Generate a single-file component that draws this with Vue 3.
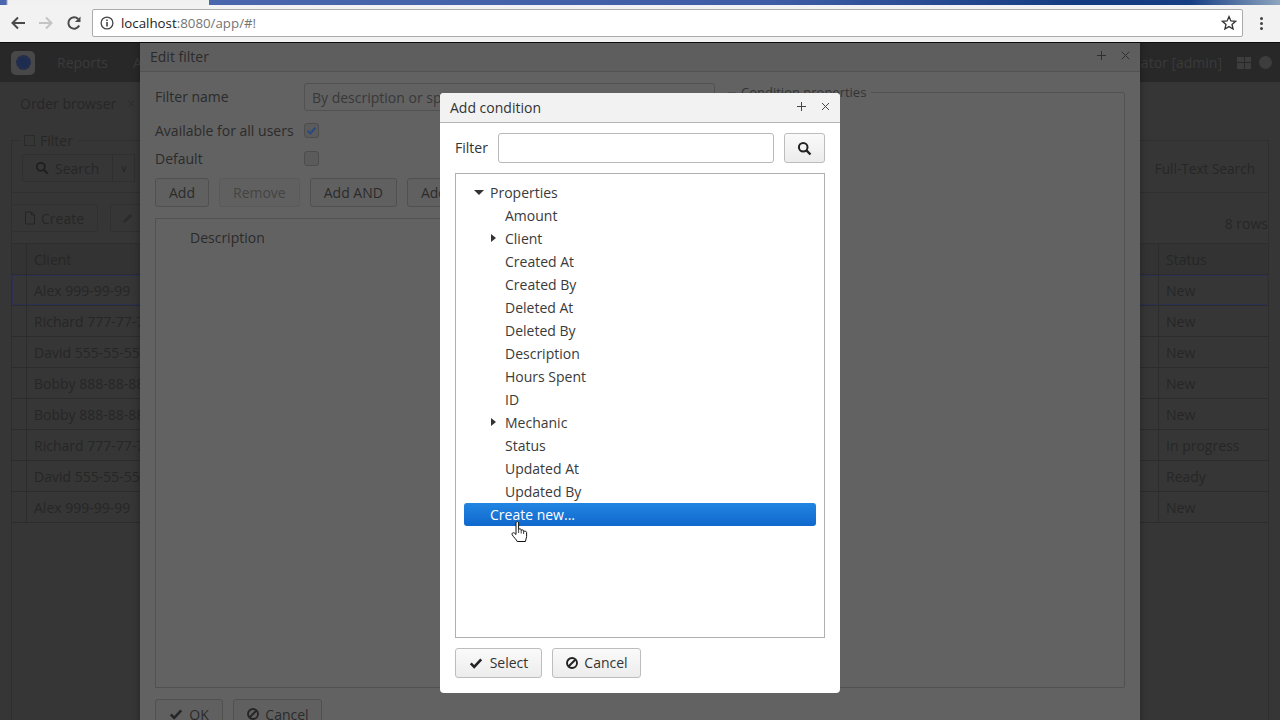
<script setup>
const tree = [
  { label: 'Properties', level: 'top', caret: 'down' },
  { label: 'Amount', level: 'sub' },
  { label: 'Client', level: 'sub', caret: 'right' },
  { label: 'Created At', level: 'sub' },
  { label: 'Created By', level: 'sub' },
  { label: 'Deleted At', level: 'sub' },
  { label: 'Deleted By', level: 'sub' },
  { label: 'Description', level: 'sub' },
  { label: 'Hours Spent', level: 'sub' },
  { label: 'ID', level: 'sub' },
  { label: 'Mechanic', level: 'sub', caret: 'right' },
  { label: 'Status', level: 'sub' },
  { label: 'Updated At', level: 'sub' },
  { label: 'Updated By', level: 'sub' },
  { label: 'Create new...', level: 'top', selected: true }
]
const rows = [
  ['Alex 999-99-99', 'New'],
  ['Richard 777-77-77', 'New'],
  ['David 555-55-55', 'New'],
  ['Bobby 888-88-88', 'New'],
  ['Bobby 888-88-88', 'New'],
  ['Richard 777-77-77', 'In progress'],
  ['David 555-55-55', 'Ready'],
  ['Alex 999-99-99', 'New']
]
</script>

<template>
  <div class="screen">
    <div class="tabstrip"><div class="tab"></div></div>
    <div class="toolbar">
      <svg class="nav-ic" viewBox="0 0 16 16"><path d="M15 8H3M8 2.5 2.5 8 8 13.5" fill="none" stroke="#4a4a4a" stroke-width="2"/></svg>
      <svg class="nav-ic" viewBox="0 0 16 16"><path d="M1 8h12M8 2.5 13.5 8 8 13.5" fill="none" stroke="#c4c4c4" stroke-width="2"/></svg>
      <svg class="nav-ic" viewBox="0 0 16 16"><path d="M13.2 10.5A5.7 5.7 0 1 1 12.2 4" fill="none" stroke="#4a4a4a" stroke-width="2"/><path d="M14.5 1.5v5.6H8.9z" fill="#4a4a4a"/></svg>
      <div class="omnibox">
        <svg class="info" viewBox="0 0 14 14"><circle cx="7" cy="7" r="5.9" fill="none" stroke="#444" stroke-width="1.3"/><path d="M7 6v4.4M7 3.4v1.5" stroke="#444" stroke-width="1.6"/></svg>
        <span class="url"><b>localhost</b>:8080/app/#!</span>
        <svg class="star" viewBox="0 0 16 16"><path d="m8 1.6 1.9 4.3 4.7.4-3.6 3.1 1.1 4.6L8 11.6 3.9 14 5 9.4 1.4 6.3l4.7-.4z" fill="none" stroke="#333" stroke-width="1.3"/></svg>
      </div>
      <div class="dots"><i></i><i></i><i></i></div>
    </div>

    <div class="app">
      <div class="navbar">
        <div class="logo"><div class="logo-in"></div></div>
        <span class="nav-item">Reports</span>
        <span class="nav-item">A</span>
        <span class="user">ator [admin]</span>
        <div class="grid-ic"><i></i><i></i><i></i><i></i></div>
        <div class="off-ic"></div>
      </div>
      <div class="page">
        <div class="crumb"><span>Order browser</span><span class="crumb-x">×</span></div>
        <div class="filter-panel">
          <div class="filter-legend"><span class="minus"></span>Filter</div>
          <div class="filter-row">
            <div class="search-btn">
              <svg class="ic14" viewBox="0 0 14 14"><circle cx="5.8" cy="5.8" r="4" fill="none" stroke="#1f1f1f" stroke-width="1.8"/><path d="m8.8 8.8 3.8 3.8" stroke="#1f1f1f" stroke-width="2"/></svg>
              Search
            </div>
            <div class="search-drop">∨</div>
            <span class="fts">Full-Text Search</span>
          </div>
        </div>
        <div class="actions">
          <div class="create">
            <svg class="ic14" viewBox="0 0 14 14"><path d="M2.5 1h6l3 3v9h-9zM8.5 1v3h3" fill="none" stroke="#242424"/></svg>
            Create
          </div>
          <div class="edit"><svg class="ic14" viewBox="0 0 14 14"><path d="m2 12 1-3 6-6 2 2-6 6z" fill="#2b2b2b"/></svg></div>
          <span class="count">8 rows</span>
        </div>
        <div class="table">
          <div class="thead"><span class="mark"></span><span class="client">Client</span><span class="status">Status</span></div>
          <div v-for="(r, i) in rows" :key="i" class="trow" :class="{ current: i === 0 }">
            <span class="mark"></span><span class="client"><span class="client-clip">{{ r[0] }}</span></span><span class="status">{{ r[1] }}</span>
          </div>
        </div>
      </div>

      <section class="edit-window">
        <header class="edit-head">
          <span>Edit filter</span>
          <span class="win-btns">
            <svg class="wi" viewBox="0 0 9 9"><path d="M4.5 0v9M0 4.5h9" stroke="#2f2f2f"/></svg>
            <svg class="wi" viewBox="0 0 9 9"><path d="m.7.7 7.6 7.6M8.3.7.7 8.3" stroke="#2f2f2f"/></svg>
          </span>
        </header>
        <div class="edit-body">
          <div class="edit-left">
            <div class="frow name-row">
              <label>Filter name</label>
              <div class="fake-input">By description or sp</div>
            </div>
            <div class="frow">
              <label>Available for all users</label>
              <span class="chk"><svg viewBox="0 0 12 12"><path d="m2.5 6.2 2.5 2.5 4.5-5.2" fill="none" stroke="#2a4a80" stroke-width="2"/></svg></span>
            </div>
            <div class="frow"><label>Default</label><span class="chk"></span></div>
            <div class="btn-row">
              <span class="dbtn">Add</span>
              <span class="dbtn off">Remove</span>
              <span class="dbtn">Add AND</span>
              <span class="dbtn">Add OR</span>
            </div>
            <div class="cond-box"><div class="cond-head">Description</div></div>
          </div>
          <fieldset class="props"><legend>Condition properties</legend></fieldset>
        </div>
        <div class="edit-foot">
          <span class="dbtn foot ok">
            <svg class="ic14" viewBox="0 0 14 14"><path d="m1.8 7.4 3.4 3.4 7-7.4" fill="none" stroke="#262626" stroke-width="2.6"/></svg>OK
          </span>
          <span class="dbtn foot cancel-d">
            <svg class="ic14" viewBox="0 0 14 14"><circle cx="7" cy="7" r="5" fill="none" stroke="#262626" stroke-width="1.9"/><path d="m3.5 10.5 7-7" stroke="#262626" stroke-width="1.9"/></svg>Cancel
          </span>
        </div>
      </section>

      <section class="dialog">
        <header class="dlg-head">
          <span>Add condition</span>
          <span class="dlg-btns">
            <svg class="wi" viewBox="0 0 9 9"><path d="M4.5 0v9M0 4.5h9" stroke="#444"/></svg>
            <svg class="wi" viewBox="0 0 9 9"><path d="m1 1 7 7M8 1 1 8" stroke="#444"/></svg>
          </span>
        </header>
        <div class="dlg-body">
          <div class="dlg-filter">
            <label>Filter</label>
            <div class="dlg-input"></div>
            <button class="btn search">
              <svg class="ic15" viewBox="0 0 14 14"><circle cx="5.8" cy="5.8" r="4" fill="none" stroke="#222" stroke-width="1.9"/><path d="m8.8 8.8 3.8 3.8" stroke="#222" stroke-width="2.2"/></svg>
            </button>
          </div>
          <div class="tree">
            <div v-for="n in tree" :key="n.label" class="node" :class="[n.level, { selected: n.selected }]">
              <span v-if="n.caret" class="caret" :class="n.caret"></span>
              <span>{{ n.label }}</span>
            </div>
          </div>
          <div class="dlg-foot">
            <button class="btn select">
              <svg class="ic14" viewBox="0 0 14 14"><path d="m1.8 7.4 3.4 3.4 7-7.4" fill="none" stroke="#222" stroke-width="2.6"/></svg>Select
            </button>
            <button class="btn cancel">
              <svg class="ic14" viewBox="0 0 14 14"><circle cx="7" cy="7" r="5" fill="none" stroke="#222" stroke-width="1.9"/><path d="m3.5 10.5 7-7" stroke="#222" stroke-width="1.9"/></svg>Cancel
            </button>
          </div>
        </div>
        <svg class="hand" viewBox="0 0 17 21"><path d="M5 1.8C5 .2 7.6 .2 7.6 1.8V8.5C8 7.5 10 7.5 10.2 8.8V9.5C10.6 8.6 12.4 8.6 12.6 9.9V10.6C13.2 9.8 15.5 10 15.6 11.5V15.5C15.6 17.2 14.6 18.5 14.4 20.5H6.2C5.5 18.5 2.8 16.5 1.2 13.8C.4 12.2 2.2 11 3.6 12.2L5 13.5Z" fill="#fff" stroke="#111"/><path d="M7.6 8.5v3.5M10.2 9.5V12.5M12.6 10.6V13" stroke="#111" stroke-width=".8" fill="none"/></svg>
      </section>
    </div>
  </div>
</template>

<style>
html, body { margin: 0; background: #363636; }
</style>

<style scoped>
.screen { width: 1280px; height: 720px; overflow: hidden; display: flex; flex-direction: column; font: 14px "Open Sans", "Liberation Sans", sans-serif; }
.tabstrip { height: 5px; flex: none; background: linear-gradient(90deg, #4a67ad 16%, #3f5da6 60%, #123a80 85%, #163e84 93%, #8fa6c0 100%); }
.tab { width: 209px; height: 5px; background: linear-gradient(90deg, #4a67ad 6px, #f1f1f1 8px); }
.toolbar { height: 37px; flex: none; background: #f2f2f2; display: flex; align-items: center; padding: 0 0 1px 4px; box-sizing: border-box; }
.nav-ic { width: 16px; height: 16px; margin: 0 6px; flex: none; }
.omnibox { margin-left: 4px; width: 1151px; height: 28px; box-sizing: border-box; background: #fff; border: 1px solid #ababab; border-radius: 2px; display: flex; align-items: center; padding: 0 5px 0 7px; }
.info { width: 14px; height: 14px; flex: none; }
.url { margin-left: 7px; color: #757575; font-size: 13.3px; }
.url b { font-weight: 400; color: #222; }
.star { width: 16px; height: 16px; margin-left: auto; }
.dots { margin-left: 17px; display: flex; flex-direction: column; gap: 2px; }
.dots i { width: 3px; height: 3px; border-radius: 50%; background: #444; }

.app { position: relative; height: 678px; background: #363636; color: #262626; border-top: 1px solid #0c0c0c; box-sizing: border-box; overflow: hidden; }
.navbar { height: 39px; background: #282828; display: flex; align-items: center; padding-left: 11px; color: #3a3a3a; }
.logo { width: 24px; height: 24px; border-radius: 5px; background: #484848; display: flex; align-items: center; justify-content: center; }
.logo-in { width: 11px; height: 11px; border-radius: 50%; background: #1f2c52; border: 2px dotted #2c3144; }
.nav-item { margin-left: 22px; }
.nav-item + .nav-item { margin-left: 25px; }
.user { margin-left: auto; }
.grid-ic { margin-left: 15px; width: 14px; height: 12px; display: grid; grid-template-columns: 1fr 1fr; gap: 1px; }
.grid-ic i { background: #3d3d3d; }
.off-ic { margin: 0 8px 0 8px; width: 13px; height: 13px; border-radius: 50%; background: #3d3d3d; }
.page { position: relative; height: 639px; padding: 0 11px; box-sizing: border-box; }
.page::after { content: ""; position: absolute; left: 11px; right: 11px; top: 58px; bottom: 0; border-left: 1px solid #2f2f2f; border-right: 1px solid #2f2f2f; pointer-events: none; }
.crumb { height: 43px; display: flex; align-items: center; padding-left: 9px; gap: 11px; }
.crumb-x { color: #2e2e2e; }
.filter-panel { height: 53px; margin-top: 15px; border-top: 1px solid #2f2f2f; border-bottom: 1px solid #2f2f2f; position: relative; padding: 13px 11px 0; box-sizing: border-box; width: 1258px; }
.filter-legend { position: absolute; top: -10px; left: 10px; background: #363636; padding: 0 6px 0 3px; line-height: 19px; display: flex; align-items: center; gap: 5px; }
.minus { width: 9px; height: 9px; border: 1px solid #2a2a2a; }
.filter-row { display: flex; align-items: center; height: 28px; }
.search-btn { width: 91px; height: 28px; box-sizing: border-box; border: 1px solid #2f2f2f; display: flex; align-items: center; gap: 6px; padding-left: 12px; border-radius: 3px 0 0 3px; }
.search-drop { width: 22px; height: 28px; box-sizing: border-box; border: 1px solid #2f2f2f; border-left: 0; text-align: center; line-height: 26px; font-size: 11px; }
.fts { margin-left: auto; margin-right: 3px; font-size: 13.6px; }
.actions { display: flex; align-items: center; margin-top: 11px; height: 28px; position: relative; }
.create { width: 87px; height: 28px; box-sizing: border-box; border: 1px solid #303030; display: flex; align-items: center; gap: 4px; padding-left: 11px; border-radius: 3px; }
.edit { margin-left: 12px; width: 60px; height: 28px; border: 1px solid #303030; box-sizing: border-box; display: flex; align-items: center; padding-left: 10px; }
.count { margin-left: auto; margin-top: 11px; margin-right: 1px; }
.table { margin-top: 11px; width: 1258px; border: 1px solid #2e2e2e; border-bottom: 0; box-sizing: border-box; position: relative; z-index: 1; }
.thead, .trow { display: flex; align-items: center; height: 31px; border-bottom: 1px solid #2c2c2c; box-sizing: border-box; position: relative; }
.thead { background: #333; }
.trow.current { box-shadow: inset 0 0 0 1px #2a3152; }
.mark { width: 15px; box-sizing: border-box; align-self: stretch; border-right: 1px solid #2c2c2c; flex: none; }
.client { margin-left: 7px; flex: 1; min-width: 0; }
.client-clip { display: block; width: 106px; overflow: hidden; white-space: nowrap; }
.status { width: 110px; flex: none; align-self: stretch; display: flex; align-items: center; border-left: 1px solid #2c2c2c; padding-left: 7px; box-sizing: border-box; }

.edit-window { position: absolute; left: 140px; top: -1px; width: 1000px; height: 720px; background: #626262; color: #2b2b2b; box-shadow: 0 0 8px rgba(0,0,0,.35); z-index: 2; }
.edit-head { height: 29px; background: #5e5e5e; border-bottom: 1px solid #525252; display: flex; align-items: center; justify-content: space-between; padding: 0 10px; }
.win-btns, .dlg-btns { display: flex; align-items: center; }
.wi { width: 9px; height: 9px; display: block; }
.win-btns { gap: 15px; margin-top: -3px; }
.edit-body { display: flex; gap: 12px; padding: 11px 15px 0; height: 616px; box-sizing: border-box; }
.edit-left { width: 560px; display: flex; flex-direction: column; flex: none; }
.frow { display: flex; align-items: center; height: 28px; }
.frow label { width: 149px; flex: none; margin-top: -2px; }
.name-row { margin-bottom: 6px; }
.fake-input { flex: 1; height: 28px; box-sizing: border-box; border: 1px solid #515151; border-radius: 3px; padding-left: 7px; line-height: 27px; color: #383838; }
.chk { width: 13px; height: 13px; border: 1px solid #4d4d4d; border-radius: 3px; background: #5b5b5b; display: block; margin-top: -1px; }
.chk svg { display: block; width: 13px; height: 13px; }
.btn-row { display: flex; gap: 10px; margin-top: 5px; }
.dbtn { height: 29px; box-sizing: border-box; border: 1px solid #505050; border-radius: 3px; padding: 0 13px; background: #606060; display: inline-flex; align-items: center; }
.dbtn.off { color: #444; border-color: #5a5a5a; }
.cond-box { margin-top: 11px; flex: 1; border: 1px solid #515151; border-right: 0; padding: 9px 0 0 34px; }
.props { flex: 1; min-width: 0; margin: 0; padding: 0; border: 1px solid #515151; border-radius: 2px; }
.props legend { margin-left: 8px; padding: 0 5px; line-height: 19px; color: #333; font-size: 13px; }
.edit-foot { display: flex; gap: 10px; padding: 11px 15px 0; }
.dbtn.foot { height: 30px; gap: 6px; padding: 0; justify-content: center; }
.dbtn.ok { width: 68px; }
.dbtn.cancel-d { width: 89px; gap: 5px; }
.ic14 { width: 14px; height: 14px; flex: none; }
.ic15 { width: 15px; height: 15px; display: block; }

.dialog { position: absolute; left: 440px; top: 50px; width: 400px; height: 600px; background: #fff; border-radius: 4px; color: #333; z-index: 3; }
.dlg-head { height: 29px; background: #f2f2f2; border-bottom: 1px solid #b4b4b4; border-radius: 4px 4px 0 0; display: flex; align-items: center; justify-content: space-between; padding: 0 10px; }
.dlg-btns { gap: 15px; margin-top: -2px; }
.dlg-body { padding: 10px 15px 15px; }
.dlg-filter { display: flex; align-items: center; height: 30px; }
.dlg-filter label { width: 43px; flex: none; margin-top: -2px; }
.dlg-input { width: 276px; height: 30px; box-sizing: border-box; border: 1px solid #b9b9b9; border-radius: 3px; }
.btn { font: inherit; color: #333; height: 30px; box-sizing: border-box; border: 1px solid #bdbdbd; border-radius: 3px; background: linear-gradient(#fafafa, #ececec); display: inline-flex; align-items: center; justify-content: center; padding: 0 0 2px; }
.btn svg { margin-top: 2px; }
.btn.search { width: 41px; margin-left: 10px; }
.tree { margin-top: 10px; height: 465px; box-sizing: border-box; border: 1px solid #b0b0b0; padding: 7px 8px 0; }
.node { height: 23px; line-height: 23px; position: relative; border-radius: 3px; color: #3a3a3a; }
.node.top { padding-left: 26px; }
.node.sub { padding-left: 41px; }
.node.selected { background: linear-gradient(#2285e2, #1068cd); color: #fff; }
.caret { position: absolute; width: 0; height: 0; }
.caret.down { left: 10px; top: 9px; border-left: 5px solid transparent; border-right: 5px solid transparent; border-top: 5px solid #333; }
.caret.right { left: 27px; top: 7px; border-top: 4.5px solid transparent; border-bottom: 4.5px solid transparent; border-left: 5px solid #333; }
.dlg-foot { display: flex; gap: 10px; margin-top: 10px; }
.btn.select { width: 87px; gap: 7px; }
.btn.cancel { width: 89px; gap: 5px; }
.hand { position: absolute; left: 71px; top: 428px; width: 17px; height: 21px; }
</style>
